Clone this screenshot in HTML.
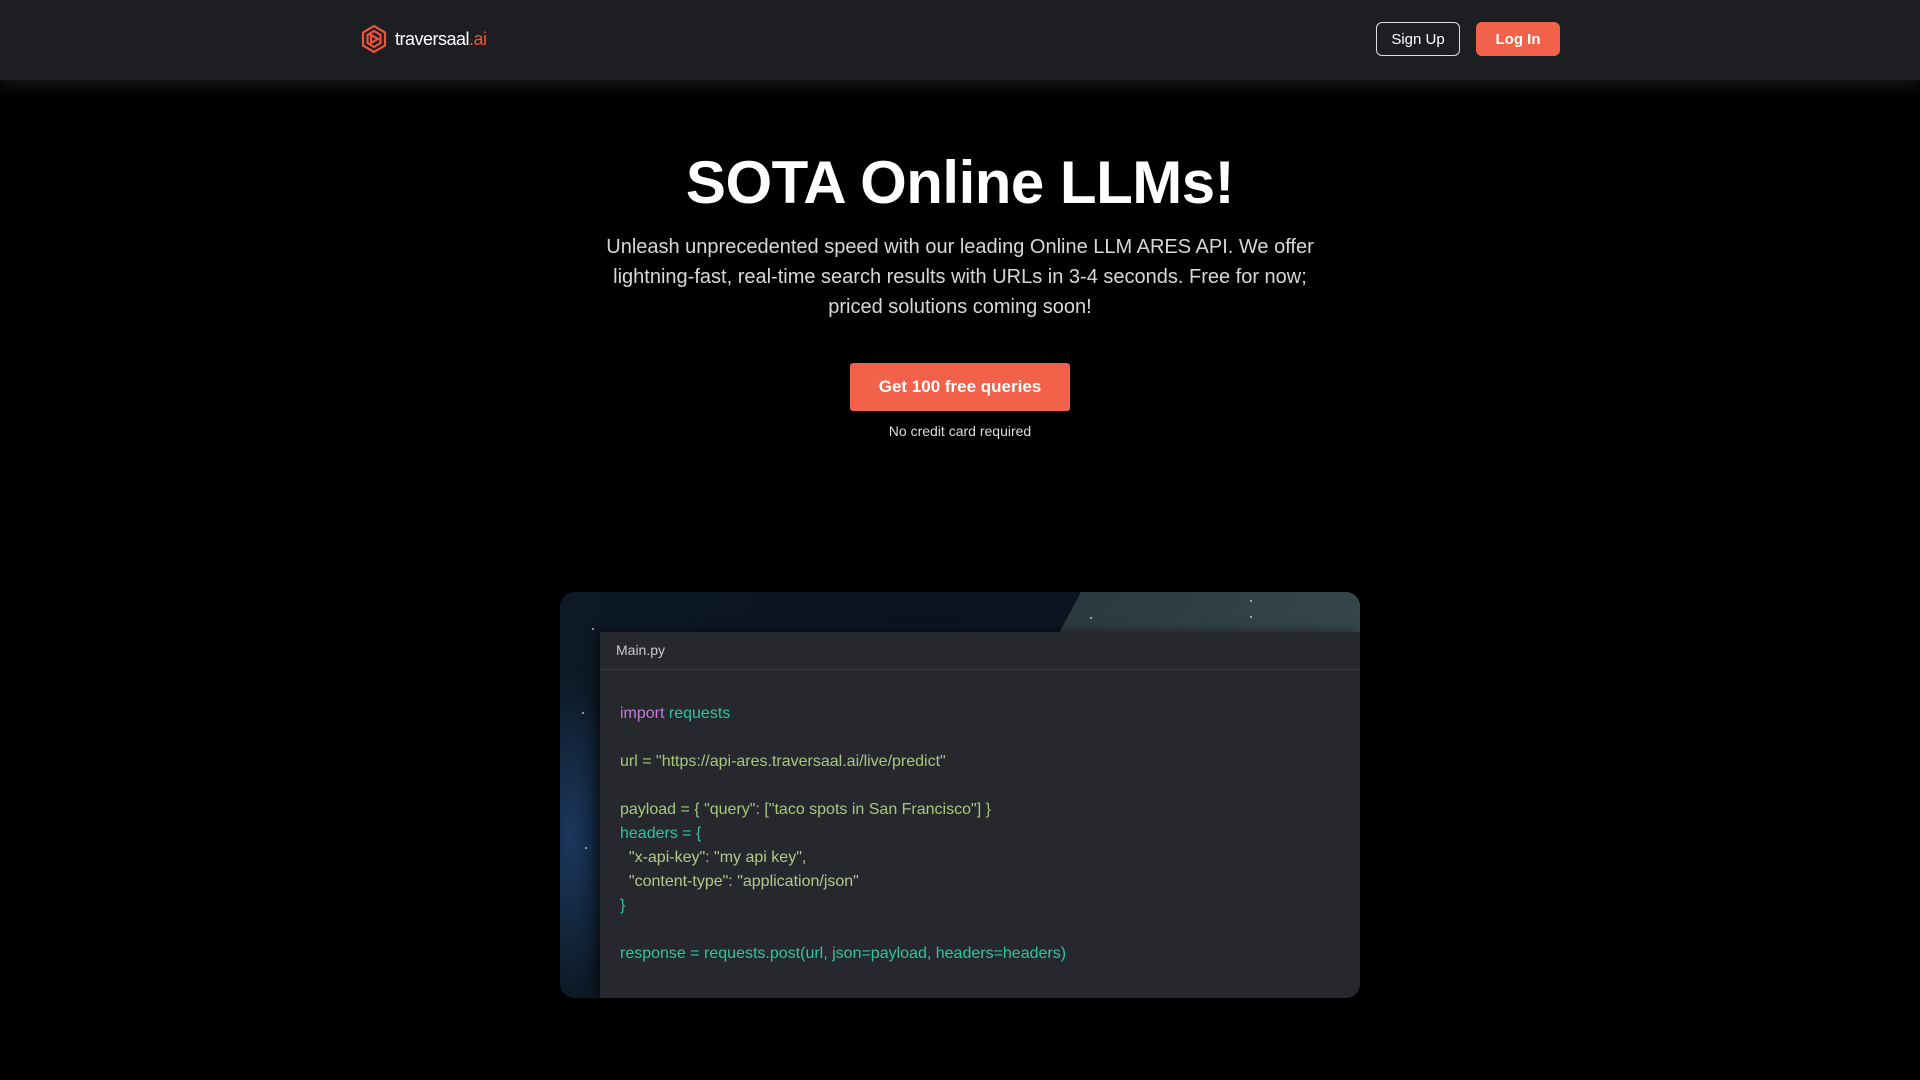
<!DOCTYPE html>
<html><head><meta charset="utf-8"><style>
*{margin:0;padding:0;box-sizing:border-box}
body{width:1920px;height:1080px;background:#000;font-family:"Liberation Sans",sans-serif;color:#fff;overflow:hidden;position:relative}
.nav{position:absolute;left:0;top:0;width:1920px;height:80px;background:#1d1e21;box-shadow:0 6px 18px rgba(40,40,45,.6)}
.logo{position:absolute;left:359px;top:24px;display:flex;align-items:center}
.logo span{font-size:18px;margin-left:6px;letter-spacing:-.5px}
.btn1{position:absolute;left:1376px;top:22px;width:84px;height:34px;border:1.5px solid #ddd;border-radius:6px;font-size:15px;display:flex;align-items:center;justify-content:center}
.btn2{position:absolute;left:1476px;top:22px;width:84px;height:34px;background:#f2614a;border-radius:6px;font-size:15px;font-weight:bold;display:flex;align-items:center;justify-content:center}
h1{position:absolute;top:148px;width:1920px;text-align:center;font-size:60px;font-weight:bold;letter-spacing:-.5px}
.p{position:absolute;top:232px;left:585px;width:750px;text-align:center;font-size:20px;line-height:30px;color:#d8d8d8}
.cta{position:absolute;left:850px;top:363px;width:220px;height:48px;background:#f2614a;border-radius:3px;font-size:17px;font-weight:bold;display:flex;align-items:center;justify-content:center}
.nc{position:absolute;top:423px;width:1920px;text-align:center;font-size:14px;color:#ddd}
.box{position:absolute;left:560px;top:592px;width:800px;height:406px;border-radius:14px;overflow:hidden;background:linear-gradient(100deg,#0d1a26 0%,#0a1420 40%,#0d1620 100%)}
.slant{position:absolute;left:505px;top:0;width:400px;height:60px;background:linear-gradient(90deg,#2c3a40,#3a4a4e);transform:skewX(-28deg)}
.glow{position:absolute;left:-40px;top:80px;width:100px;height:330px;background:radial-gradient(ellipse at center,rgba(40,80,140,.55),transparent 70%)}
.panel{position:absolute;left:40px;top:40px;right:0;bottom:0;background:#26282d;box-shadow:-4px 0 10px rgba(0,0,0,.5)}
.hdr{height:38px;border-bottom:1px solid #383b40;font-size:14px;color:#ccc;padding:10px 16px}
.code{position:absolute;left:20px;top:70px;font-size:16px;line-height:24px;white-space:pre}
.k{color:#c678dd}.g{color:#2fc5a0}.s{color:#a9c77d}.y{color:#b3c98a}
.star{position:absolute;width:2px;height:2px;background:#fff;border-radius:50%;opacity:.7}
</style></head><body>
<div class="nav">
 <div class="logo">
  <svg width="30" height="30" viewBox="0 0 30 30" fill="none" stroke="#f0523c" stroke-width="2.2">
   <polygon points="15,2 26,8.5 26,21.5 15,28 4,21.5 4,8.5"/>
   <polygon points="15,7 21.5,11 21.5,19 15,23 8.5,19 8.5,11"/>
   <path d="M12 11 L19 15 L12 19 Z"/>
  </svg>
  <span>traversaal<span style="color:#f0523c;margin:0">.ai</span></span>
 </div>
 <div class="btn1">Sign Up</div>
 <div class="btn2">Log In</div>
</div>
<h1>SOTA Online LLMs!</h1>
<div class="p">Unleash unprecedented speed with our leading Online LLM ARES API. We offer <span style="white-space:nowrap">lightning-fast,</span> real-time search results with URLs in 3-4 seconds. Free for now; priced solutions coming soon!</div>
<div class="cta">Get 100 free queries</div>
<div class="nc">No credit card required</div>
<div class="box">
 <div class="slant"></div>
 <div class="glow"></div>
 <div class="star" style="left:32px;top:36px"></div>
 <div class="star" style="left:22px;top:120px"></div>
 <div class="star" style="left:25px;top:255px"></div>
 <div class="star" style="left:690px;top:8px"></div>
 <div class="star" style="left:690px;top:24px"></div>
 <div class="star" style="left:530px;top:25px"></div>
 <div class="panel">
  <div class="hdr">Main.py</div>
  <div class="code"><span class="k">import</span> <span class="g">requests</span>

<span class="s">url = "https://api-ares.traversaal.ai/live/predict"</span>

<span class="s">payload = { "query": ["taco spots in San Francisco"] }</span>
<span class="g">headers = {</span>
<span class="y">  "x-api-key": "my api key",</span>
<span class="y">  "content-type": "application/json"</span>
<span class="g">}</span>

<span class="g">response = requests.post(url, json=payload, headers=headers)</span></div>
 </div>
</div>
</body></html>
